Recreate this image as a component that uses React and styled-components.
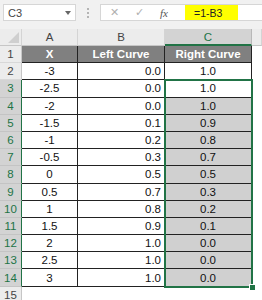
import React from "react";
import styled, { createGlobalStyle } from "styled-components";

const Global = createGlobalStyle`
  html, body { margin: 0; padding: 0; background: #fff; }
  body { font-family: "Liberation Sans", Arial, sans-serif; width: 262px; height: 300px; overflow: hidden; }
`;

const GREEN = "#217346";

const Page = styled.div`
  width: 262px;
  height: 300px;
  display: flex;
  flex-direction: column;
  background: #fff;
  overflow: hidden;
`;

const TopBar = styled.div`
  height: 29px;
  flex: none;
  box-sizing: border-box;
  padding: 4px 0 0 3px;
  background: #f1f1f1;
  display: flex;
  align-items: flex-start;
`;

const NameBox = styled.div`
  width: 73px;
  height: 17px;
  box-sizing: border-box;
  background: #fff;
  border: 1px solid #d6d6d6;
  display: flex;
  align-items: center;
  justify-content: space-between;
  padding: 0 4px 0 4px;
  font-size: 11px;
  color: #444;
`;

const Caret = styled.span`
  width: 0;
  height: 0;
  border-left: 3.5px solid transparent;
  border-right: 3.5px solid transparent;
  border-top: 4px solid #666;
  margin-top: 1px;
`;

const Grip = styled.div`
  width: 24px;
  height: 17px;
  display: flex;
  flex-direction: column;
  align-items: center;
  justify-content: center;
  gap: 2px;
  & > span { width: 2px; height: 2px; background: #b4b4b4; }
`;

const FormulaBox = styled.div`
  flex: 1;
  height: 17px;
  box-sizing: border-box;
  background: #fff;
  border: 1px solid #d6d6d6;
  border-right: none;
  display: flex;
  align-items: center;
`;

const Tool = styled.span`
  width: ${(p) => p.$w}px;
  display: flex;
  justify-content: center;
  align-items: center;
  color: ${(p) => p.$c || "#b0b0b0"};
  font-size: 11px;
`;

const Fx = styled.span`
  font-family: "Liberation Serif", "Times New Roman", serif;
  font-style: italic;
  font-size: 11px;
  color: #555;
`;

const FormulaText = styled.div`
  width: 53px;
  height: 15px;
  background: #ffff00;
  display: flex;
  align-items: center;
  box-sizing: border-box;
  padding-left: 9px;
  font-size: 10.5px;
  color: #222;
`;

const Sheet = styled.div`
  position: relative;
  flex: 1;
  min-height: 0;
  display: grid;
  grid-template-columns: 22px 56px 87px 87px 1fr;
  grid-template-rows: 17px repeat(14, 17.2px) 1fr;
  font-size: 11.5px;
  color: #111;
`;

const Corner = styled.div`
  background: #ececec;
  border-right: 1px solid #d4d4d4;
  border-bottom: 1px solid #c6c6c6;
  box-sizing: border-box;
  position: relative;
  &::after {
    content: "";
    position: absolute;
    right: 2px;
    bottom: 2px;
    width: 0;
    height: 0;
    border-left: 11px solid transparent;
    border-bottom: 11px solid #cfcfcf;
  }
`;

const ColHead = styled.div`
  box-sizing: border-box;
  background: ${(p) => (p.$sel ? "#d3d3d3" : "#ececec")};
  color: ${(p) => (p.$sel ? GREEN : "#444")};
  border-right: 1px solid ${(p) => (p.$sel ? "#b8b8b8" : "#d4d4d4")};
  border-bottom: ${(p) => (p.$sel ? `2px solid ${GREEN}` : "1px solid #c6c6c6")};
  display: flex;
  align-items: center;
  justify-content: center;
  font-size: 11.5px;
  padding-top: ${(p) => (p.$sel ? "1px" : "0")};
`;

const RowHead = styled.div`
  box-sizing: border-box;
  background: ${(p) => (p.$sel ? "#d3d3d3" : "#ececec")};
  color: ${(p) => (p.$sel ? GREEN : "#444")};
  border-right: 1px solid ${(p) => (p.$sel ? GREEN : "#c6c6c6")};
  border-bottom: 1px solid ${(p) => (p.$sel ? "#c4c4c4" : "#d8d8d8")};
  display: flex;
  align-items: ${(p) => (p.$top ? "flex-start" : "center")};
  padding-top: ${(p) => (p.$top ? "2px" : "0")};
  justify-content: center;
  font-size: 11.5px;
`;

const Cell = styled.div`
  box-sizing: border-box;
  background: ${(p) => p.$bg || "#fff"};
  color: ${(p) => (p.$head ? "#fff" : "#111")};
  font-weight: ${(p) => (p.$head ? 700 : 400)};
  border-right: 1px solid #222;
  border-bottom: 1px solid #222;
  display: flex;
  align-items: center;
  justify-content: ${(p) => p.$align || "center"};
  padding-right: ${(p) => (p.$align === "flex-end" ? "3px" : "0")};
  white-space: nowrap;
  overflow: hidden;
`;

const Blank = styled.div`
  background: #fff;
`;

const Selection = styled.div`
  grid-column: 4 / 5;
  grid-row: 4 / 16;
  position: absolute;
  top: -1px;
  left: -1px;
  right: -1px;
  bottom: -1px;
  border: 2px solid ${GREEN};
  pointer-events: none;
  z-index: 2;
`;

const FillHandle = styled.span`
  position: absolute;
  right: -5px;
  bottom: -5px;
  width: 5px;
  height: 5px;
  background: ${GREEN};
  border: 1px solid #fff;
`;

const rows = [
  ["-3", "0.0", "1.0"],
  ["-2.5", "0.0", "1.0"],
  ["-2", "0.0", "1.0"],
  ["-1.5", "0.1", "0.9"],
  ["-1", "0.2", "0.8"],
  ["-0.5", "0.3", "0.7"],
  ["0", "0.5", "0.5"],
  ["0.5", "0.7", "0.3"],
  ["1", "0.8", "0.2"],
  ["1.5", "0.9", "0.1"],
  ["2", "1.0", "0.0"],
  ["2.5", "1.0", "0.0"],
  ["3", "1.0", "0.0"],
];

export default function App() {
  return (
    <Page>
      <Global />
      <TopBar>
        <NameBox>
          C3
          <Caret />
        </NameBox>
        <Grip>
          <span />
          <span />
          <span />
        </Grip>
        <FormulaBox>
          <Tool $w={26}>✕</Tool>
          <Tool $w={24}>✓</Tool>
          <Tool $w={26}>
            <Fx>fx</Fx>
          </Tool>
          <Tool $w={8} />
          <FormulaText>=1-B3</FormulaText>
        </FormulaBox>
      </TopBar>
      <Sheet>
        <Corner />
        <ColHead>A</ColHead>
        <ColHead>B</ColHead>
        <ColHead $sel>C</ColHead>
        <ColHead />

        <RowHead>1</RowHead>
        <Cell $head $bg="#808080">X</Cell>
        <Cell $head $bg="#808080">Left Curve</Cell>
        <Cell $head $bg="#808080">Right Curve</Cell>
        <Blank />

        {rows.map((r, i) => {
          const n = i + 2;
          const sel = n >= 3;
          return (
            <React.Fragment key={n}>
              <RowHead $sel={sel}>{n}</RowHead>
              <Cell>{r[0]}</Cell>
              <Cell $align="flex-end">{r[1]}</Cell>
              <Cell $bg={sel && n !== 3 ? "#d0d0d0" : "#fff"}>{r[2]}</Cell>
              <Blank />
            </React.Fragment>
          );
        })}

        <RowHead $top>15</RowHead>
        <Blank />
        <Blank />
        <Blank />
        <Blank />

        <Selection>
          <FillHandle />
        </Selection>
      </Sheet>
    </Page>
  );
}
